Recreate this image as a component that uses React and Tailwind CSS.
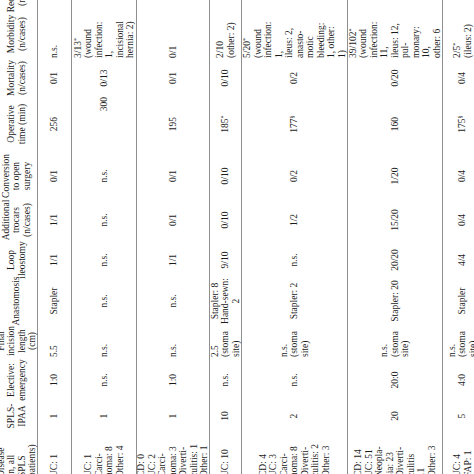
const cols = [
  { w: "w-[45px]", head: "items-start", body: "items-start" },
  { w: "w-[32px]", head: "items-center", body: "items-center" },
  { w: "w-[40px]", head: "items-center", body: "items-center" },
  { w: "w-[38px]", head: "items-center", body: "items-start pl-[3px]" },
  { w: "w-[42px]", head: "items-center", body: "items-center" },
  { w: "w-[40px]", head: "items-center", body: "items-center" },
  { w: "w-[40px]", head: "items-center", body: "items-center" },
  { w: "w-[48px]", head: "items-center", body: "items-center" },
  { w: "w-[56px]", head: "items-center", body: "items-center" },
  { w: "w-[36px]", head: "items-center", body: "items-center" },
  { w: "w-[52px]", head: "items-center", body: "items-start pl-[2px]" },
  { w: "w-[38px]", head: "items-center", body: "items-center" },
];

const Sup = ({ children }) => <sup className="text-[6px]">{children}</sup>;

const header = [
  ["Disease", "(n, all", "SPLS", "patients)"],
  ["SPLS-", "IPAA"],
  ["Elective:", "emergency"],
  ["Final", "incision", "length", "(cm)"],
  ["Anastomosis"],
  ["Loop", "ileostomy"],
  ["Additional", "trocars", "(n/cases)"],
  ["Conversion", "to open", "surgery"],
  ["Operative", "time (min)"],
  ["Mortality", "(n/cases)"],
  ["Morbidity", "(n/cases)"],
  ["Reoperation", "(n/cases)"],
];

const rows = [
  {
    h: "h-[34px]",
    cells: [
      ["UC: 1"], ["1"], ["1:0"], ["5.5"], ["Stapler"], ["1/1"], ["1/1"], ["0/1"],
      ["256"], ["0/1"], ["n.s."], [],
    ],
  },
  {
    h: "h-[65px]",
    cells: [
      ["UC: 1", "Carci-", "noma: 8", "Other: 4"], ["1"], ["n.s."], ["n.s."], ["n.s."],
      ["n.s."], ["n.s."], ["n.s."], ["300"], ["0/13"],
      [<>3/13<Sup>*</Sup></>, "(wound", "infection:", "1,", "incisional", "hernia: 2)"], [],
    ],
  },
  {
    h: "h-[73px]",
    cells: [
      ["CD: 0", "UC: 2", "Carci-", "noma: 3", "Diverti-", "culitis: 1", "Other: 1"],
      ["1"], ["1:0"], ["n.s."], ["n.s."], ["1/1"], ["0/1"], ["0/1"], ["195"], ["0/1"], ["0/1"], [],
    ],
  },
  {
    h: "h-[32px]",
    cells: [
      ["UC: 10"], ["10"], ["n.s."], ["2.5", "(stoma", "site)"], ["Stapler: 8", "Hand-sewn:", "2"],
      ["9/10"], ["0/10"], ["0/10"], [<>185<Sup>*</Sup></>], ["0/10"], ["2/10", "(other: 2)"], [],
    ],
  },
  {
    h: "h-[106px]",
    cells: [
      ["CD: 4", "UC: 3", "Carci-", "noma: 8", "Diverti-", "culitis: 2", "Other: 3"],
      ["2"], ["n.s."], ["n.s.", "(stoma", "site)"], ["Stapler: 2"], ["n.s."], ["1/2"], ["0/2"],
      [<>177<Sup>§</Sup></>], ["0/2"],
      [<>5/20<Sup>*</Sup></>, "(wound", "infection:", "1,", "ileus: 2,", "anasto-", "motic", "bleeding:", "1, other:", "1)"],
      [],
    ],
  },
  {
    h: "h-[95px]",
    cells: [
      ["CD: 14", "UC: 51", "Neopla-", "sia: 23", "Diverti-", "culitis", "11", "Other: 3"],
      ["20"], ["20:0"], ["n.s.", "(stoma", "site)"], ["Stapler: 20"], ["20/20"], ["15/20"], ["1/20"],
      ["160"], ["0/20"],
      [<>39/102<Sup>*</Sup></>, "(wound", "infection:", "11,", "ileus: 12,", "pul-", "monary:", "10,", "other: 6"],
      [],
    ],
  },
  {
    h: "h-[40px]",
    cells: [
      ["UC: 4", "FAP: 1"], ["5"], ["4:0"], ["n.s.", "(stoma", "site)"], ["Stapler"], ["4/4"], ["0/4"], ["0/4"],
      [<>175<Sup>§</Sup></>], ["0/4"], [<>2/5<Sup>*</Sup></>, "(ileus: 2)"], [],
    ],
  },
];

function Cell({ col, lines, align, extra = "" }) {
  return (
    <div className={`${col.w} shrink-0 flex flex-col justify-center ${align} ${extra}`}>
      {lines.map((l, i) => (
        <div key={i} className="whitespace-nowrap">
          {l}
        </div>
      ))}
    </div>
  );
}

export default function App() {
  return (
    <div className="relative w-[474px] h-[474px] overflow-hidden bg-white text-[#1c1c1c]">
      <div
        className="absolute left-[-4px] top-[477px] w-[507px] origin-top-left -rotate-90 text-[9.5px] leading-[10.5px]"
        style={{ fontFamily: '"Liberation Serif", "Times New Roman", serif' }}
      >
        <div className="flex h-[42px] border-b border-[#8f8f8f]">
          {header.map((lines, i) => (
            <Cell key={i} col={cols[i]} lines={lines} align={cols[i].head} />
          ))}
        </div>
        {rows.map((r, ri) => (
          <div key={ri} className={`flex ${r.h} border-b border-[#8f8f8f]`}>
            {r.cells.map((lines, i) => (
              <Cell
                key={i}
                col={cols[i]}
                lines={lines}
                align={cols[i].body}
                extra={ri === 1 && i === 8 ? "pl-[40px]" : ""}
              />
            ))}
          </div>
        ))}
      </div>
    </div>
  );
}
